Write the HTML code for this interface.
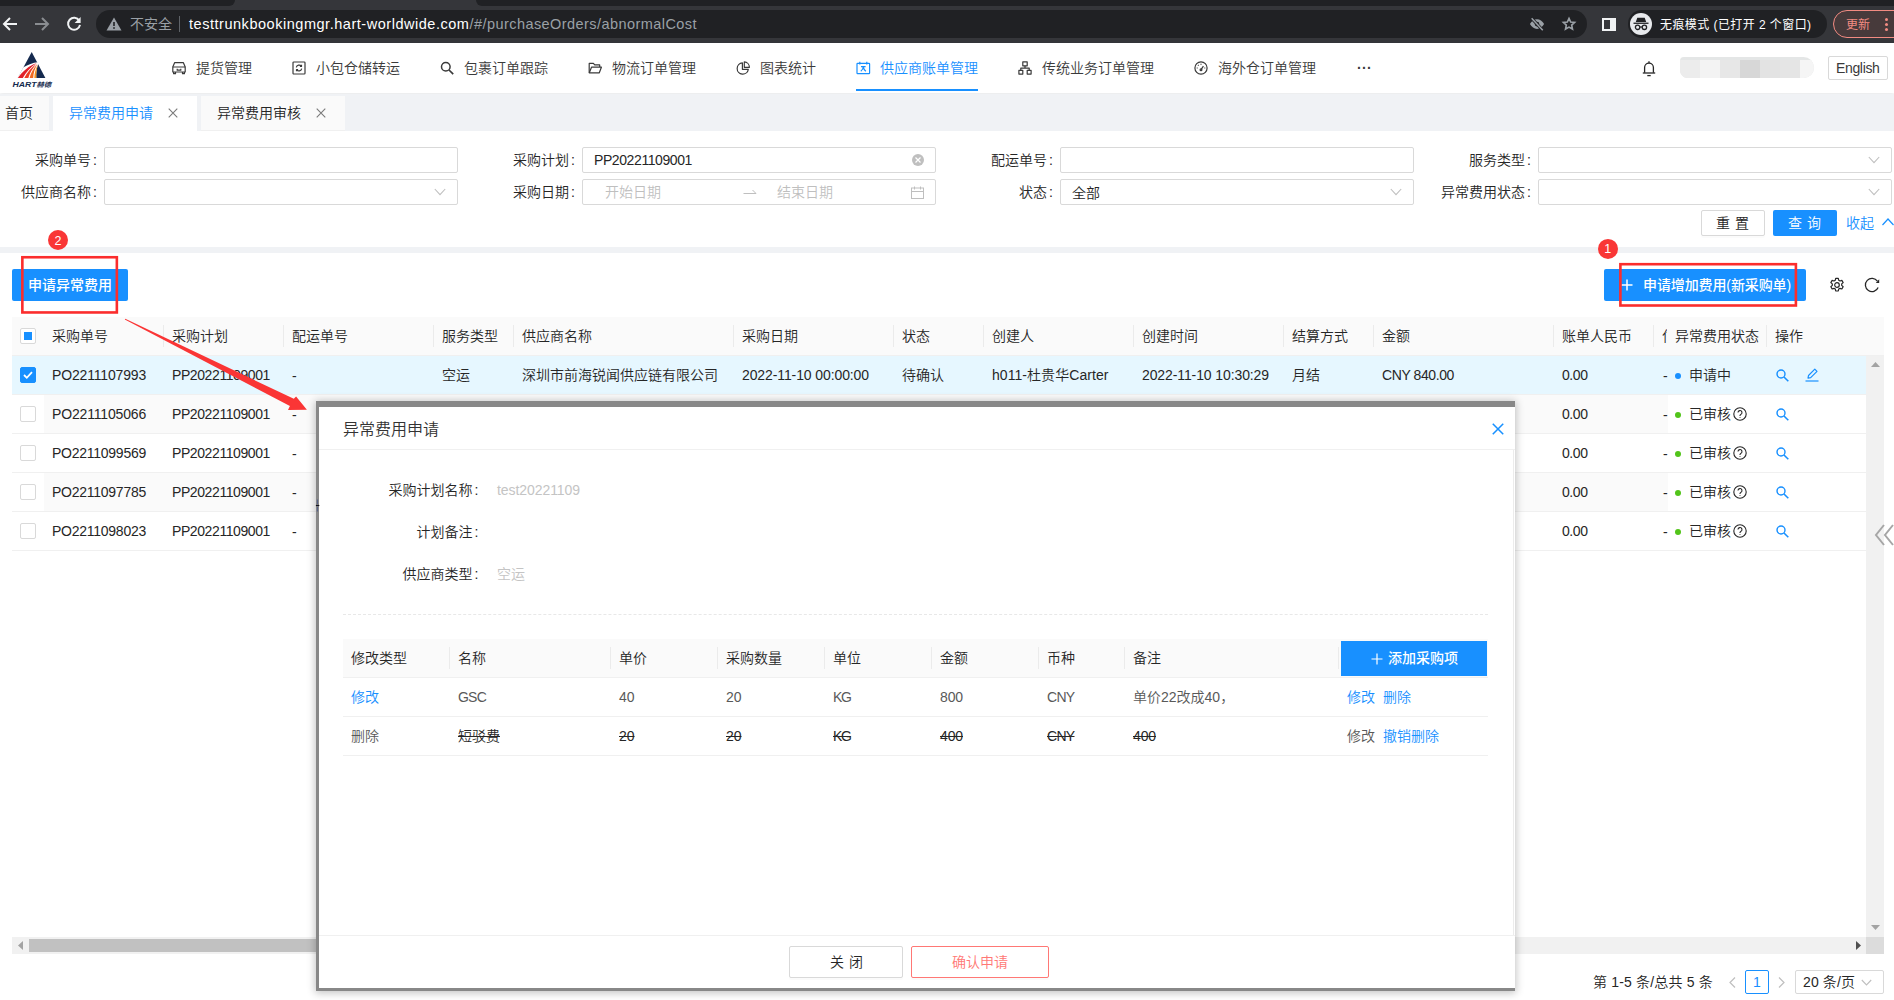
<!DOCTYPE html>
<html lang="zh-CN">
<head>
<meta charset="utf-8">
<title>异常费用申请</title>
<style>
html,body{margin:0;padding:0}
body{width:1894px;height:1000px;overflow:hidden;position:relative;background:#fff;font-family:"Liberation Sans","Noto Sans CJK SC",sans-serif;font-size:14px;color:#262626;line-height:1;font-weight:350}
div,span,svg{box-sizing:border-box}
.a{position:absolute}
.t{position:absolute;white-space:nowrap;line-height:20px;height:20px}
svg{position:absolute;overflow:visible}
/* chrome */
#chrome{left:0;top:0;width:1894px;height:43px;background:#35363a}
#chrome .tabstrip{left:0;top:0;width:235px;height:6px;background:#202124;border-bottom-right-radius:6px}
#chrome .tabstrip2{left:476px;top:0;width:1418px;height:6px;background:#202124;border-bottom-left-radius:6px}
#omni{left:96px;top:10px;width:1491px;height:28px;border-radius:14px;background:#202124}
/* header */
#hdr{left:0;top:43px;width:1894px;height:50px;background:#fff;box-shadow:0 1px 4px rgba(0,21,41,.12)}
.nav{position:absolute;top:15px;height:20px;line-height:20px;font-size:14px;color:#3a3a3a;white-space:nowrap}
/* tabs */
#tabs{left:0;top:94px;width:1894px;height:37px;background:#f0f2f5}
.tab{position:absolute;top:2px;height:35px;background:#fafafa;box-shadow:inset 0 -1px 0 #f0f0f0;line-height:35px;font-size:14px;white-space:nowrap}

/* search */
  .colon{margin-left:2px}
.lbl{position:absolute;height:26px;line-height:26px;font-size:14px;color:#262626;text-align:right;white-space:nowrap}
.inp{position:absolute;height:26px;width:354px;border:1px solid #d9d9d9;border-radius:2px;background:#fff}
.ph{color:#bfbfbf}
.chev{position:absolute}

/* table */
.th{position:absolute;top:0;height:38px;line-height:38px;font-size:14px;color:#262626;white-space:nowrap}
.sep{position:absolute;top:8px;width:1px;height:22px;background:#ebebeb}
.row{position:absolute;left:12px;width:1854px;height:39px;border-bottom:1px solid #f0f0f0}
.td{position:absolute;top:0;height:38px;line-height:38px;font-size:14px;color:#262626;white-space:nowrap}
.cb{position:absolute;left:8px;top:11px;width:16px;height:16px;border:1px solid #d9d9d9;border-radius:2px;background:#fff}
.btnp{position:absolute;height:32px;border-radius:2px;background:#1890ff}

/* modal */
#modal{left:316px;top:401px;width:1199px;height:590px;background:#888;box-shadow:0 1px 8px 1px rgba(0,0,0,.24)}
#mbody{position:absolute;left:3px;top:6px;width:1196px;height:581px;background:#fff}
.ml{position:absolute;height:20px;line-height:20px;font-size:14px;color:#262626;text-align:right;white-space:nowrap}
.mh{position:absolute;top:0;height:38px;line-height:38px;font-size:14px;color:#262626;white-space:nowrap}
.mc{position:absolute;top:0;height:38px;line-height:38px;font-size:14px;color:#595959;white-space:nowrap}
.del{text-decoration:line-through;color:#262626}
.lnk{color:#1890ff}
</style>
</head>
<body>
<!-- ===== browser chrome ===== -->
<div id="chrome" class="a">
  <div class="a tabstrip"></div>
  <div class="a tabstrip2"></div>
  <!-- back -->
  <svg style="left:2px;top:16px" width="16" height="16" viewBox="0 0 16 16"><path d="M15 8H2.5M8 2L2 8l6 6" fill="none" stroke="#f1f3f4" stroke-width="2"/></svg>
  <!-- forward -->
  <svg style="left:34px;top:16px" width="16" height="16" viewBox="0 0 16 16"><path d="M1 8h12.5M8 2l6 6-6 6" fill="none" stroke="#8a8d91" stroke-width="2"/></svg>
  <!-- reload -->
  <svg style="left:66px;top:16px" width="16" height="16" viewBox="0 0 16 16"><path d="M13.2 4.6A6 6 0 1 0 14 8.9" fill="none" stroke="#f1f3f4" stroke-width="2"/><path d="M14.6 1v6h-6z" fill="#f1f3f4"/></svg>
  <div id="omni" class="a">
    <svg style="left:10px;top:7px" width="16" height="14" viewBox="0 0 16 14"><path d="M8 0.5L15.5 13.5H0.5z" fill="#9aa0a6"/><rect x="7.2" y="5" width="1.6" height="4" fill="#202124"/><rect x="7.2" y="10.2" width="1.6" height="1.6" fill="#202124"/></svg>
    <span class="t" style="left:34px;top:4px;font-size:14px;font-weight:400;color:#9aa0a6">不安全</span>
    <div class="a" style="left:83px;top:6px;width:1px;height:16px;background:#5f6368"></div>
    <span class="t" style="letter-spacing:0.531px;left:93px;top:4px;font-size:14.5px;color:#fff">testtrunkbookingmgr.hart-worldwide.com</span><span class="t" style="letter-spacing:0.437px;left:373.5px;top:4px;font-size:14.5px;color:#9aa0a6">/#/purchaseOrders/abnormalCost</span>
  </div>
  <!-- eye off -->
  <svg style="left:1529px;top:17px" width="16" height="14.200" viewBox="0 0 18 16"><path d="M1 8c2-3.6 4.8-5.4 8-5.4S15 4.400 17 8c-2 3.600-4.800 5.400-8 5.400S3 11.600 1 8z" fill="#9aa0a6"/><circle cx="9" cy="8" r="2.600" fill="#202124"/><path d="M2.500 1l13 14" stroke="#202124" stroke-width="3.400"/><path d="M3 1.500l12.500 13.500" stroke="#9aa0a6" stroke-width="1.700"/></svg>
  <!-- star -->
  <svg style="left:1562px;top:17px" width="14" height="13.200" viewBox="0 0 18 17"><path d="M9 1.800l2.150 4.700 5.100.55-3.800 3.450 1.050 5.050L9 13l-4.500 2.550 1.050-5.050-3.800-3.450 5.100-.55z" fill="none" stroke="#9aa0a6" stroke-width="2.100" stroke-linejoin="miter"/></svg>
  <!-- side panel -->
  <div class="a" style="left:1602px;top:18px;width:14px;height:13px;border:2px solid #f1f3f4;border-right-width:6px"></div>
  <!-- incognito pill -->
  <div class="a" style="left:1628px;top:10px;width:199px;height:28px;border-radius:14px;background:#202124"></div>
  <div class="a" style="left:1630px;top:13px;width:22px;height:22px;border-radius:11px;background:#e8eaed"></div>
  <svg style="left:1633px;top:17px" width="16" height="14" viewBox="0 0 16 14"><path d="M4.300 0.800h7.400l1.500 4.200H2.800z" fill="#202124"/><rect x="0.500" y="5.600" width="15" height="1.300" fill="#202124"/><circle cx="4.600" cy="10.300" r="2.200" fill="none" stroke="#202124" stroke-width="1.300"/><circle cx="11.400" cy="10.300" r="2.200" fill="none" stroke="#202124" stroke-width="1.300"/><path d="M6.800 10h2.400" stroke="#202124" stroke-width="1.200"/></svg>
  <span class="t" style="letter-spacing:0.427px;left:1660px;top:14.5px;font-size:12px;font-weight:400;color:#fff">无痕模式 (已打开 2 个窗口)</span>
  <!-- update -->
  <div class="a" style="left:1833px;top:10px;width:80px;height:28px;border-radius:14px;border:1px solid #f28b82;background:#473a3b"></div>
  <span class="t" style="left:1846px;top:14.5px;font-size:12px;font-weight:400;color:#f28b82">更新</span>
  <div class="a" style="left:1885px;top:18px;width:3px;height:3px;border-radius:2px;background:#f28b82;box-shadow:0 5px 0 #f28b82,0 10px 0 #f28b82"></div>
</div>
<!-- ===== app header ===== -->
<div id="hdr" class="a">
  <svg style="left:12px;top:7px" width="42" height="40" viewBox="12 50 42 40">
    <path d="M31.700 52L17.700 78H45.400z" fill="#152a4e"/>
    <path d="M17 78.600L23.400 67.200C28 64.500 33 62.600 37.600 62.200L38.400 63.800C36.600 68 36 73 36.300 78.600z" fill="#fff"/>
    <path d="M17.900 78C22.500 71.500 28.500 66 36.500 63 30 67.500 25.800 72.500 22.800 78z" fill="#e0202a"/>
    <path d="M24.300 78C27 72.500 31 67.500 37 63.500 32.500 68 29.800 73 28.300 78z" fill="#ee3c23"/>
    <path d="M29.600 78C30.800 73 33.300 68 37.500 64 34.600 68.500 33.500 73 33.200 78z" fill="#f26a21"/>
    <path d="M34.300 78C34.400 73.500 35.500 69 38 64.600 36.600 69 36.200 73.500 36.300 78z" fill="#f7941d"/>
    <text x="12.600" y="86.800" font-family="Liberation Sans, Noto Sans CJK SC, sans-serif" font-size="7.600" font-weight="700" font-style="italic" fill="#152a4e" textLength="38.500" lengthAdjust="spacingAndGlyphs">HART<tspan font-size="6.400">赫德</tspan></text>
  </svg>
  <svg style="left:172px;top:18px" width="14" height="14" viewBox="0 0 14 14" fill="none" stroke="#3a3a3a" stroke-width="1.200" stroke-linejoin="round"><path d="M0.800 6L2.600 1.700h8.800L13.200 6"/><rect x="0.800" y="6" width="12.400" height="5"/><path d="M1.600 11v1.700h1.900V11M10.500 11v1.700h1.900V11M5.200 7.800v1.400h3.600V7.800"/></svg>
  <span class="nav" style="left:196px;color:#3a3a3a">提货管理</span>
  <svg style="left:292px;top:18px" width="14" height="14" viewBox="0 0 14 14" fill="none" stroke="#3a3a3a" stroke-width="1.200" stroke-linejoin="round"><rect x="1" y="1" width="12" height="12" rx="0.800"/><path d="M4.300 6.400a2.800 2.800 0 0 1 5-1.200M9.700 7.600a2.800 2.800 0 0 1-5 1.200"/><path d="M9.500 3.700v1.700H7.900M4.500 10.300V8.600h1.600"/></svg>
  <span class="nav" style="left:316px;color:#3a3a3a">小包仓储转运</span>
  <svg style="left:440px;top:18px" width="14" height="14" viewBox="0 0 14 14" fill="none" stroke="#3a3a3a" stroke-width="1.200" stroke-linejoin="round"><circle cx="5.800" cy="5.800" r="4.300" stroke-width="1.500"/><path d="M9 9l4.200 4.200" stroke-width="1.700"/></svg>
  <span class="nav" style="left:464px;color:#3a3a3a">包裹订单跟踪</span>
  <svg style="left:588px;top:18px" width="14" height="14" viewBox="0 0 14 14" fill="none" stroke="#3a3a3a" stroke-width="1.200" stroke-linejoin="round"><path d="M1.200 11.800V2.400h4.200l1.300 1.500h5v2.200"/><path d="M1.300 11.800l2.200-5.600h9.900l-2.100 5.600z"/></svg>
  <span class="nav" style="left:612px;color:#3a3a3a">物流订单管理</span>
  <svg style="left:736px;top:18px" width="14" height="14" viewBox="0 0 14 14" fill="none" stroke="#3a3a3a" stroke-width="1.200" stroke-linejoin="round"><path d="M6.400 1.900a5.600 5.600 0 1 0 5.900 6.400H6.400z"/><path d="M8.300 0.900v5.400h5.100A5.400 5.400 0 0 0 8.300 0.900z"/></svg>
  <span class="nav" style="left:760px;color:#3a3a3a">图表统计</span>
  <svg style="left:856px;top:18px" width="14" height="14" viewBox="0 0 14 14" fill="none" stroke="#1890ff" stroke-width="1.200" stroke-linejoin="round"><rect x="1" y="2.300" width="12.600" height="10.400" rx="0.600"/><path d="M3.800 0.800v2.600M10.800 0.800v2.600M5 5.600h4.600M7.300 5.600c0 2-0.900 3.600-2.500 4.600M7.300 5.600c0.200 2 1.100 3.600 2.600 4.600"/></svg>
  <span class="nav" style="left:880px;color:#1890ff">供应商账单管理</span>
  <svg style="left:1018px;top:18px" width="14" height="14" viewBox="0 0 14 14" fill="none" stroke="#3a3a3a" stroke-width="1.200" stroke-linejoin="round"><rect x="4.800" y="0.900" width="4.400" height="3.900"/><rect x="0.900" y="9.300" width="3.900" height="3.800"/><rect x="9.200" y="9.300" width="3.900" height="3.800"/><path d="M7 4.800v2.300M2.800 9.300V7.100h8.400v2.200"/></svg>
  <span class="nav" style="left:1042px;color:#3a3a3a">传统业务订单管理</span>
  <svg style="left:1194px;top:18px" width="14" height="14" viewBox="0 0 14 14" fill="none" stroke="#3a3a3a" stroke-width="1.200" stroke-linejoin="round"><circle cx="7" cy="7" r="6.100"/><path d="M7 8.600l2.400-3.400"/><circle cx="7" cy="8.800" r="0.900"/><path d="M2.700 7h1M10.300 7h1M7 2.800v0.900M4 4l.6.600"/></svg>
  <span class="nav" style="left:1218px;color:#3a3a3a">海外仓订单管理</span>
  <span class="nav" style="left:1357px;letter-spacing:0.3px;font-weight:700">···</span>
  <div class="a" style="left:856px;top:46px;width:122px;height:2px;background:#1890ff"></div>
  <svg style="left:1641px;top:17px" width="16" height="17" viewBox="0 0 16 17" fill="none" stroke="#262626" stroke-width="1.300"><path d="M3.600 12.800V7.600a4.400 4.400 0 0 1 8.800 0v5.200"/><path d="M1.800 13h12.400"/><path d="M8 1.200v2"/><path d="M6.300 15.600h3.400"/></svg>
  <div class="a" style="left:1680px;top:14px;width:134px;height:21px;border-radius:4px 11px 11px 8px;overflow:hidden;background:#e4e6e6"><div class="a" style="left:0px;top:3px;width:20px;height:18px;background:#ececec"></div><div class="a" style="left:20px;top:3px;width:20px;height:18px;background:#f3f3f3"></div><div class="a" style="left:40px;top:3px;width:20px;height:18px;background:#e7e7e7"></div><div class="a" style="left:60px;top:3px;width:20px;height:18px;background:#d7d7d7"></div><div class="a" style="left:80px;top:3px;width:20px;height:18px;background:#e3e3e3"></div><div class="a" style="left:100px;top:3px;width:20px;height:18px;background:#e5e5e5"></div><div class="a" style="left:120px;top:3px;width:14px;height:18px;background:#f5f5f5"></div></div>
  <div class="a" style="left:1828px;top:13px;width:60px;height:24px;border:1px solid #d9d9d9;border-radius:2px;background:#fff"></div>
  <span class="t" style="letter-spacing:-0.346px;left:1836px;top:15px;font-size:14px;color:#3a3a3a">English</span>
</div>
<!-- ===== tabs ===== -->
<div id="tabs" class="a">
  <div class="tab" style="left:0;width:49px"><span class="a" style="left:5px">首页</span></div>
  <div class="tab" style="left:53px;width:144px;background:#fff;box-shadow:none;color:#1890ff"><span class="a" style="left:16px">异常费用申请</span>
    <svg style="left:115px;top:12px" width="10" height="10" viewBox="0 0 10 10"><path d="M0.700 0.700l8.600 8.600M9.300 0.700L0.700 9.300" stroke="#7a7a7a" stroke-width="1.100"/></svg></div>
  <div class="tab" style="left:201px;width:144px"><span class="a" style="left:16px">异常费用审核</span>
    <svg style="left:115px;top:12px" width="10" height="10" viewBox="0 0 10 10"><path d="M0.700 0.700l8.600 8.600M9.300 0.700L0.700 9.300" stroke="#7a7a7a" stroke-width="1.100"/></svg></div>
</div>
<!-- ===== search ===== -->
<div id="search" class="a" style="left:0;top:131px;width:1894px;height:116px;background:#fff">
  <span class="lbl" style="right:1797px;top:16px">采购单号<span class="colon">:</span></span>
  <div class="inp" style="left:104px;top:16px"></div>
  <span class="lbl" style="right:1797px;top:48px">供应商名称<span class="colon">:</span></span>
  <div class="inp" style="left:104px;top:48px"><svg class="chev" style="left:329px;top:8px" width="12" height="8" viewBox="0 0 12 8"><path d="M0.800 1l5.200 5.600L11.200 1" fill="none" stroke="#bfbfbf" stroke-width="1.100"/></svg></div>
  <span class="lbl" style="right:1319px;top:16px">采购计划<span class="colon">:</span></span>
  <div class="inp" style="left:582px;top:16px"><span class="t" style="letter-spacing:-0.407px;left:11px;top:2px">PP20221109001</span><div class="a" style="left:329px;top:6px;width:12px;height:12px;border-radius:6px;background:#bfbfbf"></div><svg style="left:332px;top:9px" width="6" height="6" viewBox="0 0 6 6"><path d="M0.500 0.500l5 5M5.500 0.500l-5 5" stroke="#fff" stroke-width="1.200"/></svg></div>
  <span class="lbl" style="right:1319px;top:48px">采购日期<span class="colon">:</span></span>
  <div class="inp" style="left:582px;top:48px"><span class="t ph" style="left:22px;top:2px">开始日期</span><svg style="left:160px;top:9px" width="14" height="6" viewBox="0 0 14 6"><path d="M0.500 4.500h12.500M9.500 1l3.500 3.500" fill="none" stroke="#bfbfbf" stroke-width="1"/></svg><span class="t ph" style="left:194px;top:2px">结束日期</span><svg style="left:328px;top:6px" width="13" height="13" viewBox="0 0 13 13" fill="none" stroke="#bfbfbf" stroke-width="1"><rect x="0.500" y="2" width="12" height="10.500"/><path d="M0.500 5.500h12M3.500 0.500v3M9.500 0.500v3"/></svg></div>
  <span class="lbl" style="right:841px;top:16px">配运单号<span class="colon">:</span></span>
  <div class="inp" style="left:1060px;top:16px"></div>
  <span class="lbl" style="right:841px;top:48px">状态<span class="colon">:</span></span>
  <div class="inp" style="left:1060px;top:48px"><svg class="chev" style="left:329px;top:8px" width="12" height="8" viewBox="0 0 12 8"><path d="M0.800 1l5.200 5.600L11.200 1" fill="none" stroke="#bfbfbf" stroke-width="1.100"/></svg><span class="t" style="left:11px;top:3px">全部</span></div>
  <span class="lbl" style="right:363px;top:16px">服务类型<span class="colon">:</span></span>
  <div class="inp" style="left:1538px;top:16px"><svg class="chev" style="left:329px;top:8px" width="12" height="8" viewBox="0 0 12 8"><path d="M0.800 1l5.200 5.600L11.200 1" fill="none" stroke="#bfbfbf" stroke-width="1.100"/></svg></div>
  <span class="lbl" style="right:363px;top:48px">异常费用状态<span class="colon">:</span></span>
  <div class="inp" style="left:1538px;top:48px"><svg class="chev" style="left:329px;top:8px" width="12" height="8" viewBox="0 0 12 8"><path d="M0.800 1l5.200 5.600L11.200 1" fill="none" stroke="#bfbfbf" stroke-width="1.100"/></svg></div>
  <div class="a" style="left:1701px;top:79px;width:64px;height:26px;border:1px solid #d9d9d9;border-radius:2px;background:#fff;box-shadow:0 2px 0 rgba(0,0,0,.015)"></div><span class="t" style="left:1716px;top:82px;font-size:14px;letter-spacing:5px;color:#262626">重置</span>
  <div class="a" style="left:1773px;top:79px;width:64px;height:26px;border-radius:2px;background:#1890ff"></div><span class="t" style="left:1788px;top:82px;font-size:14px;letter-spacing:5px;color:#fff">查询</span>
  <span class="t" style="left:1846px;top:82px;font-size:14px;color:#1890ff">收起</span><svg style="left:1882px;top:87px" width="12" height="8" viewBox="0 0 12 8"><path d="M0.500 7L6 1l5.500 6" fill="none" stroke="#1890ff" stroke-width="1.200"/></svg>
</div>
<div class="a" style="left:0;top:247px;width:1894px;height:6px;background:#f0f2f5"></div>
<!-- ===== toolbar ===== -->
<div id="toolbar" class="a" style="left:0;top:253px;width:1894px;height:65px;background:#fff">
  <div class="btnp" style="left:12px;top:16px;width:116px"></div><span class="t" style="left:28px;top:22px;color:#fff;font-weight:500">申请异常费用</span>
  <div class="btnp" style="left:1604px;top:16px;width:202px"></div>
  <svg style="left:1621px;top:26px" width="12" height="12" viewBox="0 0 12 12"><path d="M6 0.500v11M0.500 6h11" stroke="#fff" stroke-width="1.500"/></svg>
  <span class="t" style="letter-spacing:-0.111px;left:1643px;top:22px;color:#fff;font-weight:500">申请增加费用(新采购单)</span>
  <svg style="left:1829px;top:24px" width="16" height="16" viewBox="0 0 16 16" fill="none" stroke="#262626" stroke-width="1.200" stroke-linejoin="round"><path d="M6.700 1.300h2.600l.4 1.900 1.300.75 1.850-.6 1.300 2.250-1.450 1.300v1.500l1.450 1.300-1.300 2.250-1.850-.6-1.300.75-.4 1.900H6.700l-.4-1.900-1.300-.75-1.850.6-1.300-2.250 1.450-1.300v-1.500L1.850 5.600l1.300-2.250 1.850.6 1.300-.75z"/><circle cx="8" cy="8" r="2.300"/></svg>
  <svg style="left:1864px;top:24px" width="16" height="16" viewBox="0 0 16 16" fill="none" stroke="#262626" stroke-width="1.300"><path d="M13.410 4.210A6.600 6.600 0 1 0 14.120 10.470"/><path d="M15.200 2.200V6H11.800z" fill="#262626" stroke="none"/></svg>
</div>
<!-- ===== table ===== -->
<div id="table" class="a" style="left:0;top:317px;width:1894px;height:640px">
  <div class="a" style="left:12px;top:0;width:1872px;height:39px;background:#fafafa;border-bottom:1px solid #f0f0f0">
    <div class="cb"><div class="a" style="left:3px;top:3px;width:8px;height:8px;background:#1890ff"></div></div>
    <span class="th" style="left:40px">采购单号</span>
    <span class="th" style="left:160px">采购计划</span>
    <span class="th" style="left:280px">配运单号</span>
    <span class="th" style="left:430px">服务类型</span>
    <span class="th" style="left:510px">供应商名称</span>
    <span class="th" style="left:730px">采购日期</span>
    <span class="th" style="left:890px">状态</span>
    <span class="th" style="left:980px">创建人</span>
    <span class="th" style="left:1130px">创建时间</span>
    <span class="th" style="left:1280px">结算方式</span>
    <span class="th" style="left:1370px">金额</span>
    <span class="th" style="left:1550px">账单人民币</span>
    <div class="sep" style="left:151px"></div>
    <div class="sep" style="left:271px"></div>
    <div class="sep" style="left:421px"></div>
    <div class="sep" style="left:501px"></div>
    <div class="sep" style="left:721px"></div>
    <div class="sep" style="left:881px"></div>
    <div class="sep" style="left:971px"></div>
    <div class="sep" style="left:1121px"></div>
    <div class="sep" style="left:1271px"></div>
    <div class="sep" style="left:1361px"></div>
    <div class="sep" style="left:1541px"></div>
    <div class="sep" style="left:1641px"></div>
    <span class="th" style="left:1650px;width:5px;overflow:hidden">付款</span>
    <span class="th" style="left:1663px">异常费用状态</span><div class="sep" style="left:1754px"></div><span class="th" style="left:1763px">操作</span>
  </div>
  <div class="row" style="top:39px;background:#e6f7ff">
    <div class="cb" style="background:#1890ff;border-color:#1890ff"><svg style="left:2px;top:3px" width="10" height="8" viewBox="0 0 10 8"><path d="M1 4l2.800 2.800L9 1.200" fill="none" stroke="#fff" stroke-width="1.800"/></svg></div>
    <span class="td" style="letter-spacing:-0.168px;left:40px">PO2211107993</span>
    <span class="td" style="letter-spacing:-0.407px;left:160px">PP20221109001</span>
    <span class="td" style="left:280px;top:1px">-</span>
    <span class="td" style="left:430px">空运</span>
    <span class="td" style="left:510px">深圳市前海锐闻供应链有限公司</span>
    <span class="td" style="letter-spacing:-0.104px;left:730px">2022-11-10 00:00:00</span>
    <span class="td" style="left:890px">待确认</span>
    <span class="td" style="letter-spacing:0.059px;left:980px">h011-杜贵华Carter</span>
    <span class="td" style="letter-spacing:-0.104px;left:1130px">2022-11-10 10:30:29</span>
    <span class="td" style="left:1280px">月结</span>
    <span class="td" style="letter-spacing:-0.402px;left:1370px">CNY 840.00</span>
    <span class="td" style="letter-spacing:-0.438px;left:1550px">0.00</span>
    <span class="td" style="left:1651px;top:1px">-</span>
    <div class="a" style="left:1656px;top:0;width:198px;height:38px;background:#e6f7ff"></div>
    <div class="a" style="left:1663px;top:16.600px;width:6px;height:6px;border-radius:3px;background:#1890ff"></div><span class="td" style="left:1677px">申请中</span>
    <svg style="left:1764px;top:13px" width="13" height="13" viewBox="0 0 13 13" fill="none" stroke="#1890ff"><circle cx="5" cy="5" r="4" stroke-width="1.400"/><path d="M8 8l4.300 4.300" stroke-width="1.600"/></svg>
    <svg style="left:1793px;top:12px" width="14" height="14" viewBox="0 0 14 14" fill="none" stroke="#1890ff" stroke-width="1.200"><path d="M0.500 13h13"/><path d="M3 10.200l.5-2.700L9.800 1.200l2.200 2.200-6.300 6.300z" stroke-linejoin="round"/></svg>
  </div>
  <div class="row" style="top:78px;background:#fff">
    <div class="a" style="left:32px;top:0;width:1624px;height:38px;background:#fafafa"></div>
    <div class="cb"></div>
    <span class="td" style="letter-spacing:-0.168px;left:40px">PO2211105066</span>
    <span class="td" style="letter-spacing:-0.407px;left:160px">PP20221109001</span>
    <span class="td" style="left:280px;top:1px">-</span>
    <span class="td" style="letter-spacing:-0.438px;left:1550px">0.00</span>
    <span class="td" style="left:1651px;top:1px">-</span>
    <div class="a" style="left:1656px;top:0;width:198px;height:38px;background:#fff"></div>
    <div class="a" style="left:1663px;top:16.600px;width:6px;height:6px;border-radius:3px;background:#52c41a"></div><span class="td" style="left:1677px">已审核</span>
    <svg style="left:1721px;top:12px" width="14" height="14" viewBox="0 0 14 14" fill="none" stroke="#262626" stroke-width="1.100"><circle cx="7" cy="7" r="6.200"/><path d="M5 5.600a2 2 0 1 1 2.800 1.800c-.5.250-.8.600-.8 1.200v.3"/><circle cx="7" cy="10.500" r="0.500" fill="#262626" stroke="none"/></svg>
    <svg style="left:1764px;top:13px" width="13" height="13" viewBox="0 0 13 13" fill="none" stroke="#1890ff"><circle cx="5" cy="5" r="4" stroke-width="1.400"/><path d="M8 8l4.300 4.300" stroke-width="1.600"/></svg>
  </div>
  <div class="row" style="top:117px;background:#fff">
    <div class="cb"></div>
    <span class="td" style="letter-spacing:-0.255px;left:40px">PO2211099569</span>
    <span class="td" style="letter-spacing:-0.407px;left:160px">PP20221109001</span>
    <span class="td" style="left:280px;top:1px">-</span>
    <span class="td" style="letter-spacing:-0.438px;left:1550px">0.00</span>
    <span class="td" style="left:1651px;top:1px">-</span>
    <div class="a" style="left:1656px;top:0;width:198px;height:38px;background:#fff"></div>
    <div class="a" style="left:1663px;top:16.600px;width:6px;height:6px;border-radius:3px;background:#52c41a"></div><span class="td" style="left:1677px">已审核</span>
    <svg style="left:1721px;top:12px" width="14" height="14" viewBox="0 0 14 14" fill="none" stroke="#262626" stroke-width="1.100"><circle cx="7" cy="7" r="6.200"/><path d="M5 5.600a2 2 0 1 1 2.800 1.800c-.5.250-.8.600-.8 1.200v.3"/><circle cx="7" cy="10.500" r="0.500" fill="#262626" stroke="none"/></svg>
    <svg style="left:1764px;top:13px" width="13" height="13" viewBox="0 0 13 13" fill="none" stroke="#1890ff"><circle cx="5" cy="5" r="4" stroke-width="1.400"/><path d="M8 8l4.300 4.300" stroke-width="1.600"/></svg>
  </div>
  <div class="row" style="top:156px;background:#fff">
    <div class="a" style="left:32px;top:0;width:1624px;height:38px;background:#fafafa"></div>
    <div class="cb"></div>
    <span class="td" style="letter-spacing:-0.255px;left:40px">PO2211097785</span>
    <span class="td" style="letter-spacing:-0.407px;left:160px">PP20221109001</span>
    <span class="td" style="left:280px;top:1px">-</span>
    <span class="td" style="letter-spacing:-0.438px;left:1550px">0.00</span>
    <span class="td" style="left:1651px;top:1px">-</span>
    <div class="a" style="left:1656px;top:0;width:198px;height:38px;background:#fff"></div>
    <div class="a" style="left:1663px;top:16.600px;width:6px;height:6px;border-radius:3px;background:#52c41a"></div><span class="td" style="left:1677px">已审核</span>
    <svg style="left:1721px;top:12px" width="14" height="14" viewBox="0 0 14 14" fill="none" stroke="#262626" stroke-width="1.100"><circle cx="7" cy="7" r="6.200"/><path d="M5 5.600a2 2 0 1 1 2.800 1.800c-.5.250-.8.600-.8 1.200v.3"/><circle cx="7" cy="10.500" r="0.500" fill="#262626" stroke="none"/></svg>
    <svg style="left:1764px;top:13px" width="13" height="13" viewBox="0 0 13 13" fill="none" stroke="#1890ff"><circle cx="5" cy="5" r="4" stroke-width="1.400"/><path d="M8 8l4.300 4.300" stroke-width="1.600"/></svg>
  </div>
  <div class="row" style="top:195px;background:#fff">
    <div class="cb"></div>
    <span class="td" style="letter-spacing:-0.255px;left:40px">PO2211098023</span>
    <span class="td" style="letter-spacing:-0.407px;left:160px">PP20221109001</span>
    <span class="td" style="left:280px;top:1px">-</span>
    <span class="td" style="letter-spacing:-0.438px;left:1550px">0.00</span>
    <span class="td" style="left:1651px;top:1px">-</span>
    <div class="a" style="left:1656px;top:0;width:198px;height:38px;background:#fff"></div>
    <div class="a" style="left:1663px;top:16.600px;width:6px;height:6px;border-radius:3px;background:#52c41a"></div><span class="td" style="left:1677px">已审核</span>
    <svg style="left:1721px;top:12px" width="14" height="14" viewBox="0 0 14 14" fill="none" stroke="#262626" stroke-width="1.100"><circle cx="7" cy="7" r="6.200"/><path d="M5 5.600a2 2 0 1 1 2.800 1.800c-.5.250-.8.600-.8 1.200v.3"/><circle cx="7" cy="10.500" r="0.500" fill="#262626" stroke="none"/></svg>
    <svg style="left:1764px;top:13px" width="13" height="13" viewBox="0 0 13 13" fill="none" stroke="#1890ff"><circle cx="5" cy="5" r="4" stroke-width="1.400"/><path d="M8 8l4.300 4.300" stroke-width="1.600"/></svg>
  </div>
  <div class="a" style="left:1866px;top:39px;width:18px;height:581px;background:#f1f1f1"></div>
  <svg style="left:1871px;top:45px" width="9" height="5" viewBox="0 0 9 5"><path d="M0 5L4.500 0 9 5z" fill="#a3a3a3"/></svg>
  <svg style="left:1871px;top:608px" width="9" height="5" viewBox="0 0 9 5"><path d="M0 0L4.500 5 9 0z" fill="#a3a3a3"/></svg>
  <div class="a" style="left:12px;top:620px;width:1854px;height:17px;background:#f1f1f1"></div>
  <div class="a" style="left:29px;top:622px;width:1400px;height:13px;background:#c1c1c1"></div>
  <svg style="left:18px;top:624px" width="5" height="9" viewBox="0 0 5 9"><path d="M5 0L0 4.500 5 9z" fill="#a3a3a3"/></svg>
  <svg style="left:1856px;top:624px" width="5" height="9" viewBox="0 0 5 9"><path d="M0 0L5 4.500 0 9z" fill="#505050"/></svg>
  <div class="a" style="left:1866px;top:620px;width:18px;height:17px;background:#dcdcdc"></div>
  <svg style="left:1874px;top:206px" width="20" height="24" viewBox="0 0 20 24" fill="none" stroke="#a6a6a6" stroke-width="2"><path d="M10 2L2 12l8 10M19 2l-8 10 8 10"/></svg>
</div>
<!-- ===== pager ===== -->
<div id="pager" class="a" style="left:0;top:968px;width:1894px;height:32px">
  <span class="t" style="letter-spacing:0.181px;left:1593px;top:4px">第 1-5 条/总共 5 条</span>
  <svg style="left:1729px;top:9px" width="7" height="11" viewBox="0 0 7 11"><path d="M6 0.500L1 5.500l5 5" fill="none" stroke="#bfbfbf" stroke-width="1.200"/></svg>
  <div class="a" style="left:1745px;top:2px;width:24px;height:24px;border:1px solid #1890ff;border-radius:2px;background:#fff"></div><span class="t" style="left:1753px;top:4px;color:#1890ff">1</span>
  <svg style="left:1778px;top:9px" width="7" height="11" viewBox="0 0 7 11"><path d="M1 0.500l5 5-5 5" fill="none" stroke="#bfbfbf" stroke-width="1.200"/></svg>
  <div class="a" style="left:1795px;top:2px;width:89px;height:24px;border:1px solid #d9d9d9;border-radius:2px;background:#fff"></div><span class="t" style="letter-spacing:0.107px;left:1803px;top:4px">20 条/页</span>
  <svg style="left:1861px;top:11px" width="11" height="7" viewBox="0 0 11 7"><path d="M0.800 1l4.700 5L10.200 1" fill="none" stroke="#bfbfbf" stroke-width="1.100"/></svg>
</div>
<!-- ===== modal ===== -->
<div id="modal" class="a"><div id="mbody">
  <span class="t" style="left:24px;top:12.5px;font-size:16px;color:#333">异常费用申请</span>
  <svg style="left:1173px;top:16px" width="12" height="12" viewBox="0 0 11 11"><path d="M0.700 0.700l9.600 9.600M10.300 0.700L0.700 10.300" stroke="#1890ff" stroke-width="1.400"/></svg>
  <div class="a" style="left:0;top:42px;width:1196px;height:1px;background:#f0f0f0"></div>
  <span class="ml" style="right:1036.5px;top:73px">采购计划名称<span class="colon">:</span></span>
  <span class="t" style="letter-spacing:-0.069px;left:178px;top:73px;color:#c4c4c4">test20221109</span>
  <span class="ml" style="right:1036.5px;top:115px">计划备注<span class="colon">:</span></span>
  <span class="ml" style="right:1036.5px;top:157px">供应商类型<span class="colon">:</span></span>
  <span class="t" style="left:178px;top:157px;color:#c4c4c4">空运</span>
  <div class="a" style="left:24px;top:207px;width:1145px;height:0;border-top:1px dashed #e8e8e8"></div>
  <div class="a" style="left:24px;top:232px;width:1145px;height:39px;background:#fafafa;border-bottom:1px solid #f0f0f0">
    <span class="mh" style="left:8px">修改类型</span>
    <span class="mh" style="left:115px">名称</span>
    <span class="mh" style="left:276px">单价</span>
    <span class="mh" style="left:383px">采购数量</span>
    <span class="mh" style="left:490px">单位</span>
    <span class="mh" style="left:597px">金额</span>
    <span class="mh" style="left:704px">币种</span>
    <span class="mh" style="left:790px">备注</span>
    <div class="sep" style="left:106px"></div>
    <div class="sep" style="left:267px"></div>
    <div class="sep" style="left:374px"></div>
    <div class="sep" style="left:481px"></div>
    <div class="sep" style="left:588px"></div>
    <div class="sep" style="left:695px"></div>
    <div class="sep" style="left:781px"></div>
    <div class="sep" style="left:995px"></div>
    <div class="a" style="left:998px;top:2px;width:146px;height:35px;background:#1890ff"></div>
    <svg style="left:1028px;top:14px" width="12" height="12" viewBox="0 0 12 12"><path d="M6 0.500v11M0.500 6h11" stroke="#fff" stroke-width="1.200"/></svg>
    <span class="mh" style="left:1045px;color:#fff;font-weight:500">添加采购项</span>
  </div>
  <div class="a" style="left:24px;top:271px;width:1145px;height:39px;border-bottom:1px solid #f0f0f0">
    <span class="mc" style="left:8px"><span class="lnk">修改</span></span>
    <span class="mc" style="letter-spacing:-0.781px;left:115px">GSC</span>
    <span class="mc" style="letter-spacing:-0.039px;left:276px">40</span>
    <span class="mc" style="letter-spacing:-0.039px;left:383px">20</span>
    <span class="mc" style="letter-spacing:-1.367px;left:490px">KG</span>
    <span class="mc" style="letter-spacing:-0.12px;left:597px">800</span>
    <span class="mc" style="letter-spacing:-0.688px;left:704px">CNY</span>
    <span class="mc" style="left:790px">单价22改成40，</span>
    <span class="mc lnk" style="left:1004px">修改</span><span class="mc lnk" style="left:1040px">删除</span>
  </div>
  <div class="a" style="left:24px;top:310px;width:1145px;height:39px;border-bottom:1px solid #f0f0f0">
    <span class="mc" style="left:8px">删除</span>
    <span class="mc del" style="left:115px">短驳费</span>
    <span class="mc del" style="letter-spacing:-0.039px;left:276px">20</span>
    <span class="mc del" style="letter-spacing:-0.039px;left:383px">20</span>
    <span class="mc del" style="letter-spacing:-1.367px;left:490px">KG</span>
    <span class="mc del" style="letter-spacing:-0.12px;left:597px">400</span>
    <span class="mc del" style="letter-spacing:-0.688px;left:704px">CNY</span>
    <span class="mc del" style="letter-spacing:-0.12px;left:790px">400</span>
    <span class="mc" style="left:1004px">修改</span><span class="mc lnk" style="left:1040px">撤销删除</span>
  </div>
  <div class="a" style="left:0;top:528px;width:1196px;height:1px;background:#f0f0f0"></div>
  <div class="a" style="left:470px;top:539px;width:114px;height:32px;border:1px solid #d9d9d9;border-radius:2px;background:#fff;box-shadow:0 2px 0 rgba(0,0,0,.015)"></div><span class="t" style="left:511px;top:545px;letter-spacing:5px;color:#262626">关闭</span>
  <div class="a" style="left:592px;top:539px;width:138px;height:32px;border:1px solid #ff7875;border-radius:2px;background:#fff;box-shadow:0 2px 0 rgba(0,0,0,.015)"></div><span class="t" style="left:633px;top:545px;color:#ff7875">确认申请</span>
  <div class="a" style="left:1194px;top:43px;width:1px;height:485px;background:#ececec"></div>
</div></div>
<!-- ===== annotations ===== -->
<div id="anno" class="a" style="left:0;top:0;width:0;height:0">
  <svg style="left:0;top:0" width="1894" height="1000" viewBox="0 0 1894 1000">
    <rect x="22.350" y="257.250" width="94.500" height="55.200" fill="none" stroke="#fb2d2d" stroke-width="2.600"/>
    <rect x="1620.400" y="264.200" width="175.500" height="41.300" fill="none" stroke="#fb2d2d" stroke-width="2.600"/>
    <circle cx="58" cy="240" r="10" fill="#f93636"/>
    <circle cx="1608" cy="248.900" r="10" fill="#f93636"/>
    <path d="M125.300 318.700L293.800 398.800 296.100 396.400 306.900 409.800 288 409.900 289.900 406 124.800 319.600z" fill="#fa3535"/>
    <path d="M317.400 499.500v4.500M317.400 507v4.500" stroke="#2a3f8a" stroke-width="1" opacity=".55"/><path d="M315.900 505.500h3.400" stroke="#10101c" stroke-width="1.200"/>
    <text x="54.400" y="244.600" font-family="Liberation Sans, sans-serif" font-size="12.500" fill="#fff">2</text>
    <text x="1604.300" y="253.400" font-family="Liberation Sans, sans-serif" font-size="12.500" fill="#fff">1</text>
  </svg>
</div>
</body>
</html>
